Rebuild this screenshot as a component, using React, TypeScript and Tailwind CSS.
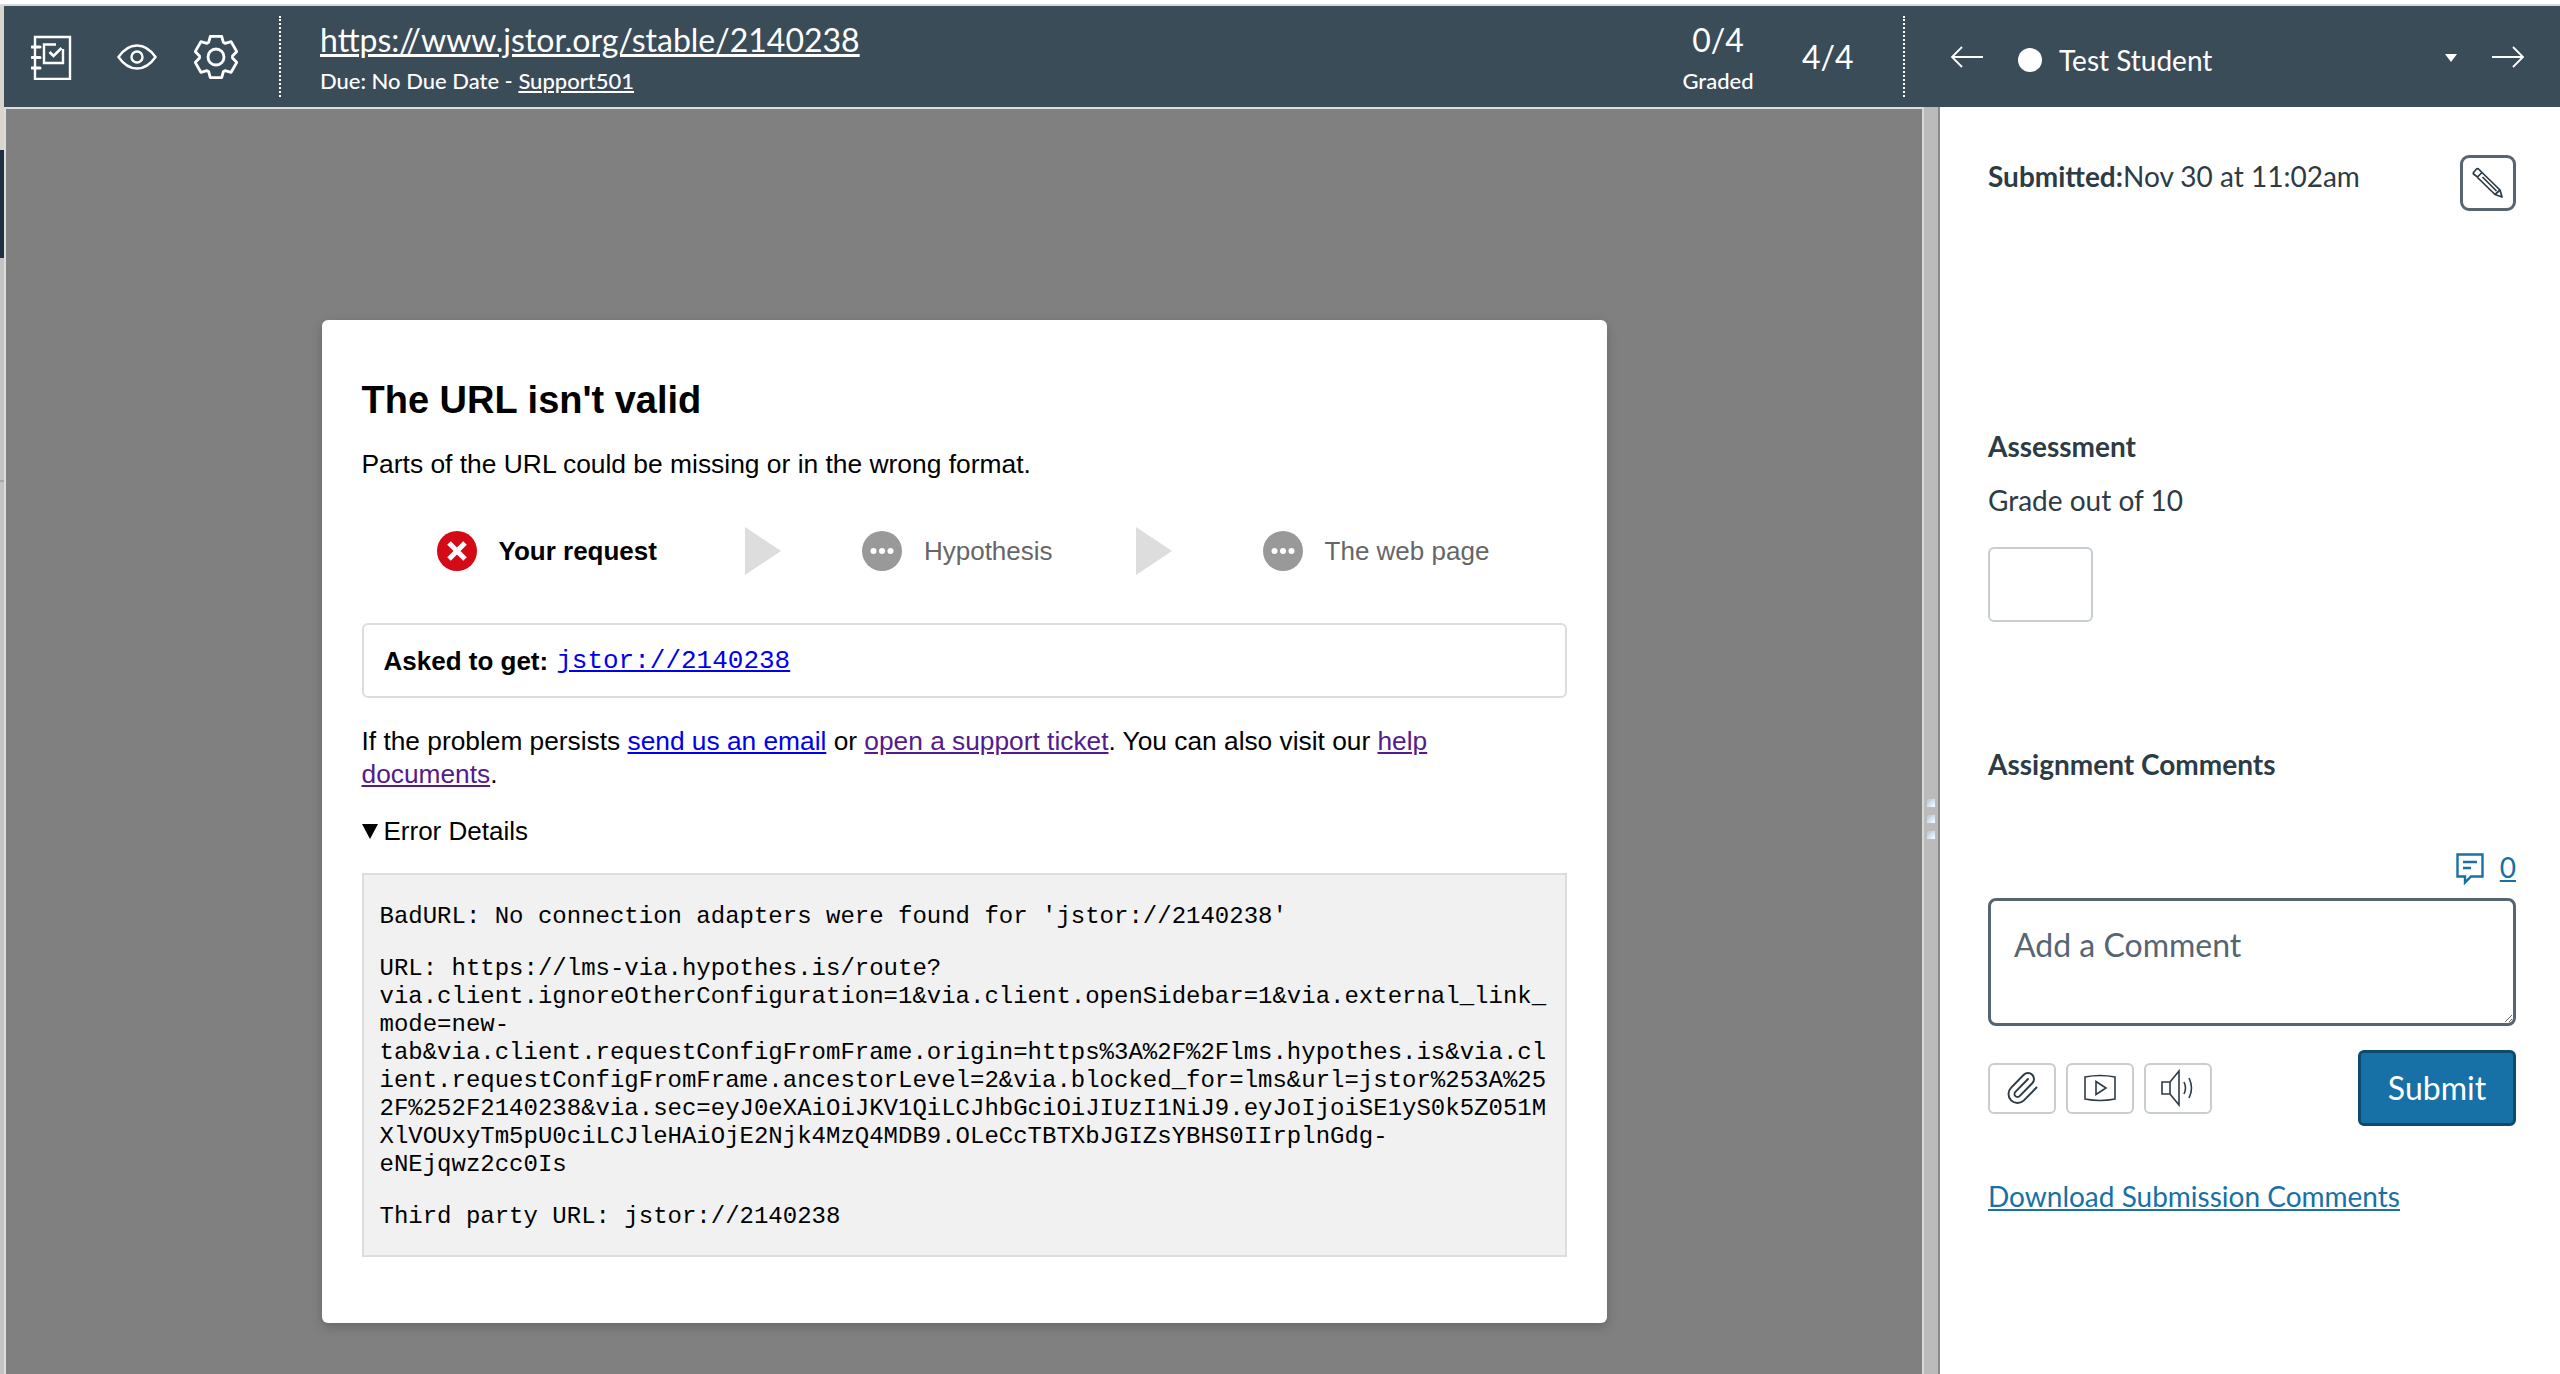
import React from "react";
import { Paperclip } from "lucide-react";

const lato = "font-['Lato',sans-serif]";

// six toothed gear, the header one has hard corners so lucide's does not fit
const gearPath = (() => {
  const pts: string[] = [];
  for (let i = 0; i < 6; i++) {
    const a = (i * 60 - 90) * (Math.PI / 180);
    const steps: [number, number][] = [
      [-0.46, 16.5],
      [-0.27, 21.5],
      [0.27, 21.5],
      [0.46, 16.5],
    ];
    steps.forEach(([d, r]) => {
      pts.push(`${(22 + r * Math.cos(a + d)).toFixed(1)} ${(23 + r * Math.sin(a + d)).toFixed(1)}`);
    });
  }
  return `M${pts.join("L")}Z`;
})();

const GradebookIcon = () => (
  <svg width="42" height="46" viewBox="0 0 42 46" fill="none" stroke="white" strokeWidth="2.4">
    <path d="M4 3h35v42H4z" />
    <path d="M1 13h8M1 23.500h8M1 34h8" strokeWidth="3" strokeLinecap="round" />
    <path d="M25 10.500H13V29h19V15" />
    <path d="M18.500 18l4 4 8-8" strokeWidth="2.600" />
  </svg>
);

const EyeIcon = () => (
  <svg width="40" height="26" viewBox="0 0 40 26" fill="none" stroke="white" strokeWidth="2.400">
    <path d="M1.500 13C7 5 13 1.500 20 1.500S33 5 38.500 13C33 21 27 24.500 20 24.500S7 21 1.500 13z" />
    <circle cx="20" cy="13" r="5.500" />
  </svg>
);

const GearIcon = () => (
  <svg width="44" height="46" viewBox="0 0 44 46" fill="none" stroke="white" strokeWidth="2.800" strokeLinejoin="round">
    <path d={gearPath} />
    <circle cx="22" cy="23" r="8" />
  </svg>
);

const ArrowIcon = ({ flip }: { flip?: boolean }) => (
  <svg
    width="34"
    height="24"
    viewBox="0 0 34 24"
    fill="none"
    stroke="white"
    strokeWidth="1.800"
    className={flip ? "rotate-180" : ""}
  >
    <path d="M33 12H2M12 2L2 12l10 10" />
  </svg>
);

const PencilIcon = () => (
  <svg width="34" height="34" viewBox="0 0 34 34" fill="none" stroke="#2d3b45" strokeWidth="1.700" strokeLinejoin="round">
    <path d="M2.500 6.500l3-3.500a1.500 1.500 0 0 1 2 0l3.500 3.500-4.500 4.500-4-3a1.500 1.500 0 0 1 0-1.500z" />
    <path d="M6.500 11.500L24 28.500l7 2.500-2-7L11 6.500" />
    <path d="M11.500 11l14 14M24 28.500l5-4.500" />
  </svg>
);

const CommentIcon = () => (
  <svg width="28" height="32" viewBox="0 0 28 32" fill="none" stroke="#1770a6" strokeWidth="2.400">
    <path d="M1.500 1.500h25v22H15l-6 6v-6H1.500z" />
    <path d="M7 9h14M7 15h8" />
  </svg>
);

const VideoIcon = () => (
  <svg width="32" height="32" viewBox="0 0 32 32" fill="none" stroke="#2d3b45" strokeWidth="1.600">
    <path d="M1 5q15-3 30 0v22q-15 3-30 0z" />
    <path d="M12 9.500l10 6.500-10 6.500z" />
  </svg>
);

const AudioIcon = () => (
  <svg width="34" height="38" viewBox="0 0 34 38" fill="none" stroke="#2d3b45" strokeWidth="1.600">
    <path d="M1 13h8v12H1zM9 13L18 2v34l-9-11" />
    <path d="M23 13q3 6 0 12M28 9q5 10 0 20" />
  </svg>
);

const ErrorIcon = () => (
  <svg width="40" height="40" viewBox="0 0 40 40">
    <circle cx="20" cy="20" r="20" fill="#d40a17" />
    <path d="M12 12l16 16M28 12L12 28" stroke="white" strokeWidth="5" />
  </svg>
);

const PendingIcon = () => (
  <svg width="40" height="40" viewBox="0 0 40 40">
    <circle cx="20" cy="20" r="20" fill="#999999" />
    <circle cx="11.500" cy="20" r="3" fill="white" />
    <circle cx="20" cy="20" r="3" fill="white" />
    <circle cx="28.500" cy="20" r="3" fill="white" />
  </svg>
);

const StepArrow = ({ className }: { className: string }) => (
  <svg width="36" height="48" viewBox="0 0 36 48" className={className}>
    <path d="M0 0l36 24L0 48z" fill="#dddddd" />
  </svg>
);

const Divider = () => (
  <div className="h-[81px] w-0 border-l-2 border-dotted border-white" />
);

const Header = () => (
  <header className={`flex h-[101px] shrink-0 items-center bg-[#3b4c59] text-white ${lato}`}>
    <div className="ml-[27px] flex w-[248px] items-center">
      <GradebookIcon />
      <div className="ml-[44px]">
        <EyeIcon />
      </div>
      <div className="ml-[37px]">
        <GearIcon />
      </div>
    </div>
    <Divider />
    <div className="ml-[39px] flex w-[1360px] flex-col">
      <a href="#" className="text-[32px] leading-[44px] underline">
        https://www.jstor.org/stable/2140238
      </a>
      <div className="mt-[4px] text-[22px] leading-[30px] font-medium">
        Due: No Due Date -{" "}
        <a href="#" className="underline">
          Support501
        </a>
      </div>
    </div>
    <div className="ml-[-4px] flex w-[84px] flex-col items-center">
      <span className="text-[32px] leading-[44px]">0/4</span>
      <span className="mt-[4px] text-[22px] leading-[30px] font-medium">Graded</span>
    </div>
    <span className="ml-[42px] w-[51px] text-[32px] leading-[44px]">4/4</span>
    <div className="ml-[50px]">
      <Divider />
    </div>
    <div className="ml-[45px] flex items-center">
      <ArrowIcon />
      <span className="ml-[34px] mt-[6px] h-[24px] w-[24px] rounded-full bg-white" />
      <span className="ml-[17px] mt-[6px] w-[160px] text-[28px] leading-[40px] whitespace-nowrap">Test Student</span>
      <span className="ml-[226px] mt-[3px] h-0 w-0 border-x-[6px] border-t-[8px] border-x-transparent border-t-white" />
      <div className="ml-[34px]">
        <ArrowIcon flip />
      </div>
    </div>
  </header>
);

const ErrorCard = () => (
  <div className="mx-auto h-[1003px] w-[1285px] rounded-[6px] bg-white px-[40px] pt-[57px] font-['Liberation_Sans',sans-serif] text-[26px] text-black shadow-[0_4px_12px_rgba(0,0,0,0.2)]">
    <h1 className="text-[38px] leading-[46px] font-bold">The URL isn't valid</h1>
    <p className="mt-[24px] text-[26.4px] leading-[34px]">Parts of the URL could be missing or in the wrong format.</p>

    <div className="mt-[46px] flex h-[48px] items-center pl-[75px]">
      <ErrorIcon />
      <span className="ml-[22px] font-bold">Your request</span>
      <StepArrow className="ml-[88px]" />
      <div className="ml-[81px]">
        <PendingIcon />
      </div>
      <span className="ml-[22px] text-[#666666]">Hypothesis</span>
      <StepArrow className="ml-[83px]" />
      <div className="ml-[91px]">
        <PendingIcon />
      </div>
      <span className="ml-[22px] text-[#666666]">The web page</span>
    </div>

    <div className="mt-[48px] flex h-[75px] items-center rounded-[6px] border-2 border-[#dddddd] px-[20px] pt-[2px]">
      <span className="font-bold">Asked to get:</span>
      <a href="#" className="ml-[8px] font-['Liberation_Mono',monospace] text-[#0000ee] underline">
        jstor://2140238
      </a>
    </div>

    <p className="mt-[27px] max-w-[1100px] text-[26.3px] leading-[33px]">
      If the problem persists{" "}
      <a href="#" className="text-[#0000ee] underline">
        send us an email
      </a>{" "}
      or{" "}
      <a href="#" className="text-[#551a8b] underline">
        open a support ticket
      </a>
      . You can also visit our{" "}
      <a href="#" className="text-[#551a8b] underline">
        help documents
      </a>
      .
    </p>

    <details open className="mt-[24px]">
      <summary className="flex items-center leading-[33px] [&::-webkit-details-marker]:hidden">
        <span className="h-0 w-0 border-x-[8.5px] border-t-[15px] border-x-transparent border-t-black" />
        <span className="ml-[6px]">Error Details</span>
      </summary>
      <div className="mt-[25px] h-[384px] border-2 border-[#dddddd] bg-[#f1f1f1] px-[16px] pt-[28px] font-['Liberation_Mono',monospace] text-[24px] leading-[28px] whitespace-pre">
        <p>BadURL: No connection adapters were found for 'jstor://2140238'</p>
        <p className="mt-[24px]">
          {`URL: https://lms-via.hypothes.is/route?
via.client.ignoreOtherConfiguration=1&via.client.openSidebar=1&via.external_link_
mode=new-
tab&via.client.requestConfigFromFrame.origin=https%3A%2F%2Flms.hypothes.is&via.cl
ient.requestConfigFromFrame.ancestorLevel=2&via.blocked_for=lms&url=jstor%253A%25
2F%252F2140238&via.sec=eyJ0eXAiOiJKV1QiLCJhbGciOiJIUzI1NiJ9.eyJoIjoiSE1yS0k5Z051M
XlVOUxyTm5pU0ciLCJleHAiOjE2Njk4MzQ4MDB9.OLeCcTBTXbJGIZsYBHS0IIrplnGdg-
eNEjqwz2cc0Is`}
        </p>
        <p className="mt-[24px]">Third party URL: jstor://2140238</p>
      </div>
    </details>
  </div>
);

const IconButton = ({ children }: { children: React.ReactNode }) => (
  <button className="flex h-[51px] w-[68px] items-center justify-center rounded-[6px] border-2 border-[#c7cdd1] bg-white">
    {children}
  </button>
);

const Sidebar = () => (
  <aside className={`flex w-[620px] shrink-0 flex-col bg-white pr-[44px] pl-[48px] text-[#2d3b45] ${lato}`}>
    <div className="flex items-start justify-between pt-[48px]">
      <p className="mt-[4px] text-[28px] leading-[34px]">
        <span className="font-bold">Submitted:</span>Nov 30 at 11:02am
      </p>
      <button className="flex h-[56px] w-[56px] items-center justify-center rounded-[9px] border-[3px] border-[#556572]">
        <PencilIcon />
      </button>
    </div>

    <h2 className="mt-[218px] text-[28px] leading-[34px] font-bold">Assessment</h2>
    <p className="mt-[20px] text-[28px] leading-[34px]">Grade out of 10</p>
    <input className="mt-[30px] h-[75px] w-[105px] rounded-[6px] border-2 border-[#c7cdd1] bg-white" />

    <h2 className="mt-[125px] text-[28px] leading-[34px] font-bold">Assignment Comments</h2>

    <div className="mt-[72px] flex items-center justify-end text-[#1770a6]">
      <CommentIcon />
      <a href="#" className="ml-[16px] mt-[-4px] text-[28px] leading-[34px] underline">
        0
      </a>
    </div>
    <textarea
      placeholder="Add a Comment"
      className="mt-[13px] h-[128px] w-full rounded-[8px] border-[3px] border-[#556572] px-[23px] py-[24px] text-[32px] leading-[40px] placeholder:text-[#556572]"
    />

    <div className="mt-[24px] flex items-center">
      <div className="flex gap-[10px]">
        <IconButton>
          <Paperclip size={36} strokeWidth={1.300} color="#2d3b45" />
        </IconButton>
        <IconButton>
          <VideoIcon />
        </IconButton>
        <IconButton>
          <AudioIcon />
        </IconButton>
      </div>
      <button className="ml-auto h-[76px] w-[158px] rounded-[6px] border-[3px] border-[#0c4a70] bg-[#1770a6] text-[32px] text-white">
        Submit
      </button>
    </div>

    <a href="#" className="mt-[51px] text-[28px] leading-[38px] text-[#1770a6] underline">
      Download Submission Comments
    </a>
  </aside>
);

const Gutter = () => (
  <div className="flex w-[18px] shrink-0 flex-col gap-[8px] border-r-2 border-l-2 border-r-[#8a8a8a] border-l-[#d8d8d8] bg-[#bbbbbb] pt-[692px] pl-[3px]">
    <span className="h-[8px] w-[8px] bg-gradient-to-tl from-white to-[#a9c3dc]" />
    <span className="h-[8px] w-[8px] bg-gradient-to-tl from-white to-[#a9c3dc]" />
    <span className="h-[8px] w-[8px] bg-gradient-to-tl from-white to-[#a9c3dc]" />
  </div>
);

const App: React.FC = () => {
  return (
    <div className="flex h-screen w-screen flex-col overflow-hidden bg-white">
      <div className="h-[4px] shrink-0 bg-white" />
      <div className="h-[2px] shrink-0 bg-[#d8d8d8]" />
      <div className="flex min-h-0 flex-1">
        {/* sliver of the page behind the frame */}
        <div className="flex w-[4px] shrink-0 flex-col bg-[#c4c4c4]">
          <div className="h-[144px] bg-[#d9d4cc]" />
          <div className="h-[108px] bg-[#1f2f43]" />
          <div className="mt-[222px] h-[2px] bg-[#a0a8b0]" />
        </div>
        <div className="flex min-w-0 flex-1 flex-col">
          <Header />
          <div className="flex min-h-0 flex-1">
            <main className="min-w-0 flex-1 border-t-2 border-l-2 border-[#dddddd] bg-[#808080] pt-[211px]">
              <ErrorCard />
            </main>
            <Gutter />
            <Sidebar />
          </div>
        </div>
      </div>
    </div>
  );
};

export default App;
